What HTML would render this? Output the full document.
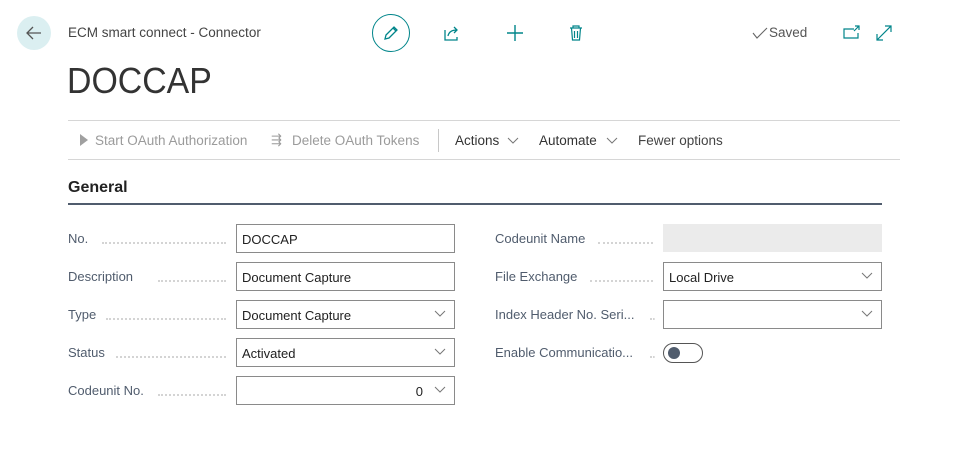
<!DOCTYPE html>
<html><head><meta charset="utf-8"><style>
*{box-sizing:border-box;margin:0;padding:0}
body{width:968px;height:458px;background:#fff;font-family:"Liberation Sans",sans-serif;color:#212121;position:relative;overflow:hidden}
.a{position:absolute;white-space:nowrap}
.lbl{font-size:13px;color:#505c6d;}
.dots{position:absolute;border-bottom:2px dotted #d4d4d4;height:1px}
.in{position:absolute;border:1px solid #8a8a8a;height:29px;font-size:13px;color:#212121;padding:7px 5px;width:219px}
.chev{position:absolute;right:8px;top:9px}
.tb{font-size:13.5px;color:#333}
.dis{color:#9b9b9b}
</style></head><body>
<div class="a" style="left:17px;top:16px;width:34px;height:34px;border-radius:50%;background:#dbeff1"></div>
<svg class="a" style="left:24px;top:23px" width="20" height="20" viewBox="0 0 20 20"><path d="M17 10H4M9 4L3 10l6 6" fill="none" stroke="#555" stroke-width="1.3"/></svg>
<div class="a" style="left:68px;top:25px;font-size:13.5px;color:#444">ECM smart connect - Connector</div>
<div class="a" style="left:67px;top:60px;font-size:36px;color:#333;transform:scaleX(0.94);transform-origin:left">DOCCAP</div>
<div class="a" style="left:372px;top:14px;width:38px;height:38px;border-radius:50%;border:1.3px solid #00858a"></div>
<svg class="a" style="left:381px;top:23px" width="20" height="20" viewBox="0 0 20 20"><path d="M4 16l1-4 8-8 3 3-8 8z M12 5l3 3" fill="none" stroke="#00858a" stroke-width="1.3"/></svg>
<svg class="a" style="left:443px;top:24px" width="18" height="18" viewBox="0 0 18 18"><path d="M2 6v10h12v-3M5 12c1-5 5-6 9-6M11 3l3 3-3 3" fill="none" stroke="#00858a" stroke-width="1.3"/></svg>
<svg class="a" style="left:505px;top:23px" width="20" height="20" viewBox="0 0 20 20"><path d="M10 2v16M2 10h16" stroke="#00858a" stroke-width="1.4"/></svg>
<svg class="a" style="left:568px;top:24px" width="16" height="18" viewBox="0 0 16 18"><path d="M2 4h12M5 4V2h6v2M3.5 4l1 12h7l1-12M6.5 7v7M9.5 7v7" fill="none" stroke="#00858a" stroke-width="1.2"/></svg>
<svg class="a" style="left:752px;top:27px" width="16" height="12" viewBox="0 0 16 12"><path d="M1 6l4 5L15 1" fill="none" stroke="#666" stroke-width="1.1"/></svg>
<div class="a" style="left:769px;top:25px;font-size:13.5px;color:#555">Saved</div>
<svg class="a" style="left:843px;top:25px" width="18" height="16" viewBox="0 0 18 16"><path d="M11 4H1v9h14V8M12 1h4v4M16 1l-5 5" fill="none" stroke="#00858a" stroke-width="1.2"/></svg>
<svg class="a" style="left:875px;top:24px" width="18" height="18" viewBox="0 0 18 18"><path d="M2 16L16 2M10 2h6v6M2 10v6h6" fill="none" stroke="#00858a" stroke-width="1.2"/></svg>
<div class="a" style="left:68px;top:120px;width:832px;height:1px;background:#d6d6d6"></div>
<div class="a" style="left:68px;top:159px;width:832px;height:1px;background:#d6d6d6"></div>
<svg class="a" style="left:79px;top:134px" width="10" height="12"><path d="M1 0v12l8-6z" fill="#a0a0a0"/></svg>
<div class="a tb dis" style="left:95px;top:133px">Start OAuth Authorization</div>
<div class="a tb dis" style="left:271px;top:132px;font-size:13px">⇶</div>
<div class="a tb dis" style="left:292px;top:133px">Delete OAuth Tokens</div>
<div class="a" style="left:438px;top:129px;width:1px;height:23px;background:#c8c8c8"></div>
<div class="a tb" style="left:455px;top:133px">Actions</div>
<svg class="a" style="left:507px;top:137px" width="12" height="8"><path d="M1 1l5 5 5-5" fill="none" stroke="#777"/></svg>
<div class="a tb" style="left:539px;top:133px">Automate</div>
<svg class="a" style="left:606px;top:137px" width="12" height="8"><path d="M1 1l5 5 5-5" fill="none" stroke="#777"/></svg>
<div class="a tb" style="left:638px;top:133px;color:#444">Fewer options</div>
<div class="a" style="left:68px;top:179px;font-size:16px;font-weight:bold;color:#222">General</div>
<div class="a" style="left:68px;top:203px;width:814px;height:2px;background:#505c6d"></div>

<div class="a lbl" style="left:68px;top:231px">No.</div><div class="dots" style="left:102px;width:124px;top:242px"></div>
<div class="in" style="left:236px;top:224px">DOCCAP</div>
<div class="a lbl" style="left:68px;top:269px">Description</div><div class="dots" style="left:158px;width:68px;top:280px"></div>
<div class="in" style="left:236px;top:262px">Document Capture</div>
<div class="a lbl" style="left:68px;top:307px">Type</div><div class="dots" style="left:106px;width:120px;top:318px"></div>
<div class="in" style="left:236px;top:300px">Document Capture<svg class="chev" width="12" height="8"><path d="M1 1l5 5 5-5" fill="none" stroke="#777"/></svg></div>
<div class="a lbl" style="left:68px;top:345px">Status</div><div class="dots" style="left:116px;width:110px;top:356px"></div>
<div class="in" style="left:236px;top:338px">Activated<svg class="chev" width="12" height="8"><path d="M1 1l5 5 5-5" fill="none" stroke="#777"/></svg></div>
<div class="a lbl" style="left:68px;top:383px">Codeunit No.</div><div class="dots" style="left:158px;width:68px;top:394px"></div>
<div class="in" style="left:236px;top:376px;text-align:right;padding-right:31px">0<svg class="chev" width="12" height="8"><path d="M1 1l5 5 5-5" fill="none" stroke="#777"/></svg></div>

<div class="a lbl" style="left:495px;top:231px">Codeunit Name</div><div class="dots" style="left:598px;width:55px;top:242px"></div>
<div class="a" style="left:663px;top:224px;width:219px;height:28px;background:#ebebeb"></div>
<div class="a lbl" style="left:495px;top:269px">File Exchange</div><div class="dots" style="left:590px;width:63px;top:280px"></div>
<div class="in" style="left:663px;top:262px">Local Drive<svg class="chev" width="12" height="8"><path d="M1 1l5 5 5-5" fill="none" stroke="#777"/></svg></div>
<div class="a lbl" style="left:495px;top:307px">Index Header No. Seri...</div><div class="dots" style="left:650px;width:5px;top:318px"></div>
<div class="in" style="left:663px;top:300px"><svg class="chev" width="12" height="8"><path d="M1 1l5 5 5-5" fill="none" stroke="#777"/></svg></div>
<div class="a lbl" style="left:495px;top:345px">Enable Communicatio...</div><div class="dots" style="left:650px;width:5px;top:356px"></div>
<div class="a" style="left:663px;top:343px;width:40px;height:20px;border:1px solid #555;border-radius:10px"></div>
<div class="a" style="left:668px;top:347px;width:12px;height:12px;border-radius:50%;background:#505c6d"></div>
</body></html>
